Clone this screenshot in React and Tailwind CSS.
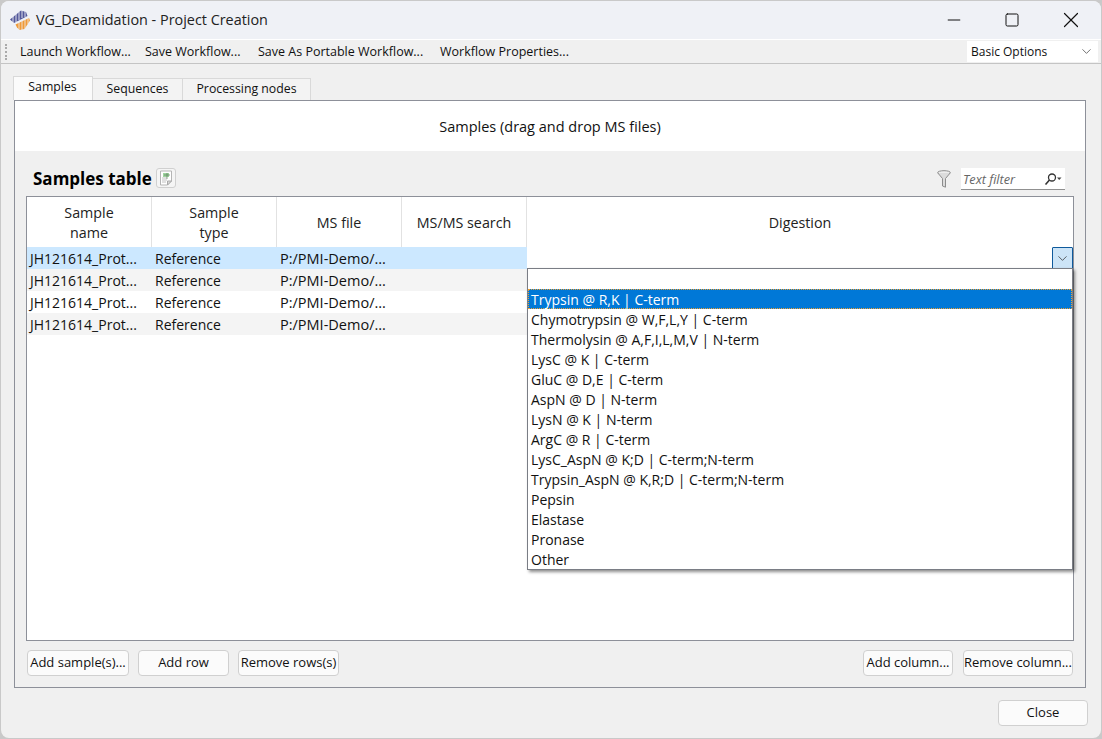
import { Minus, Square, X, ChevronDown } from "lucide-react";

const font = { fontFamily: '"Open Sans", "Noto Sans", sans-serif' };

const columns = [
  { label: ["Sample", "name"], className: "w-[125px]" },
  { label: ["Sample", "type"], className: "w-[125px]" },
  { label: ["MS file"], className: "w-[125px]" },
  { label: ["MS/MS search"], className: "w-[125px]" },
  { label: ["Digestion"], className: "flex-1" },
];

const digestions = [
  "Chymotrypsin @ W,F,L,Y | C-term",
  "Thermolysin @ A,F,I,L,M,V | N-term",
  "LysC @ K | C-term",
  "GluC @ D,E | C-term",
  "AspN @ D | N-term",
  "LysN @ K | N-term",
  "ArgC @ R | C-term",
  "LysC_AspN @ K;D | C-term;N-term",
  "Trypsin_AspN @ K,R;D | C-term;N-term",
  "Pepsin",
  "Elastase",
  "Pronase",
  "Other",
];

const Logo = () => (
  <svg width="20" height="20" viewBox="0 0 20 20" className="shrink-0">
    <path d="M0 9.500L11 .5l5 1.500 1.500 4L4 13z" fill="#53589a" />
    <path d="M3 6v8M6 4v8M9 2v8M12 0v8M15 0v7" stroke="#eff1f6" strokeWidth="0.9" />
    <path d="M5.500 14.500L19 8l1 2.500L14.500 19l-5 1-2.500-2.500z" fill="#f09a38" />
    <path d="M9 12v9M12 10.500v10M15 9v10M18 7v7" stroke="#eff1f6" strokeWidth="0.8" />
  </svg>
);

const ToolbarItem = ({ children, className }) => (
  <span className={`pt-[1px] text-[12.5px] whitespace-nowrap text-[#111] ${className}`}>{children}</span>
);

const Tab = ({ children, active, className }) => (
  <div
    className={`flex items-center justify-center border border-[#d9d9d9] border-b-0 text-[12.3px] text-[#111] ${
      active ? "bg-[#fbfbfb] h-[24px] pb-[2px] pr-[1px]" : "bg-[#f3f3f3] h-[22px] border-l-0"
    } ${className}`}
  >
    {children}
  </div>
);

const Btn = ({ children, className }) => (
  <button className={`h-[26px] rounded-[4px] border border-[#d0d0d0] bg-[#fbfbfb] text-[13px] whitespace-nowrap text-[#111] ${className}`}>
    {children}
  </button>
);

const Row = ({ selected, striped }) => {
  const bg = selected ? "bg-[#cce8ff]" : striped ? "bg-[#f4f4f4]" : "bg-white";
  return (
    <div className="flex h-[22px] text-[14px] leading-[23px] text-[#111]">
      <div className={`flex w-[500px] ${bg}`}>
        <div className="w-[125px] pl-[3px] whitespace-nowrap overflow-hidden">JH121614_Prot...</div>
        <div className="w-[125px] pl-[3px]">Reference</div>
        <div className="w-[125px] pl-[3px] text-[14.5px] whitespace-nowrap">P:/PMI-Demo/...</div>
      </div>
      <div className={`flex-1 ${selected ? "bg-white border-b border-[#ececec]" : bg}`} />
    </div>
  );
};

export default function App() {
  return (
    <div style={font} className="h-[739px] w-[1102px] overflow-hidden bg-[#c9c9c9] p-[1px]">
      <div className="flex h-full w-full flex-col overflow-hidden rounded-lg bg-[#f0f0f0]">
        {/* title bar */}
        <div className="flex h-[38px] shrink-0 items-center bg-[#eff1f6] pl-[9px] pr-[1px]">
          <Logo />
          <span className="ml-[6px] text-[14.4px] text-[#222]">VG_Deamidation - Project Creation</span>
          <div className="ml-auto flex items-center">
            <div className="flex w-[56px] justify-center"><Minus size={20} strokeWidth={1.2} color="#111" /></div>
            <div className="flex w-[60px] justify-center"><Square size={16} strokeWidth={1.5} color="#111" /></div>
            <div className="flex w-[58px] justify-center"><X size={26} strokeWidth={1.1} color="#111" /></div>
          </div>
        </div>

        {/* toolbar */}
        <div className="flex h-[25px] shrink-0 items-center border-b border-t border-b-[#c4c4c4] border-t-white bg-[#f0f0f0] pl-[4px] pr-[3px]">
          <div className="mr-[11px] h-[16px] w-[4px] border-l-2 border-dotted border-[#aaa]" />
          <div className="flex">
            <ToolbarItem className="w-[125px]">Launch Workflow...</ToolbarItem>
            <ToolbarItem className="w-[113px]">Save Workflow...</ToolbarItem>
            <ToolbarItem className="w-[182px]">Save As Portable Workflow...</ToolbarItem>
            <ToolbarItem>Workflow Properties...</ToolbarItem>
          </div>
          <div className="ml-auto flex h-[21px] w-[131px] items-center justify-between bg-white pl-[4px] pr-[4px] text-[12px] text-[#111]">
            Basic Options
            <ChevronDown size={15} strokeWidth={1.1} color="#333" />
          </div>
        </div>

        {/* tabs */}
        <div className="flex h-[36px] shrink-0 items-end pl-[12px] pr-[16px]">
          <Tab active className="w-[80px]">Samples</Tab>
          <Tab className="w-[90px]">Sequences</Tab>
          <Tab className="w-[128px]">Processing nodes</Tab>
        </div>

        {/* panel */}
        <div className="ml-[13px] mr-[15px] flex h-[588px] shrink-0 flex-col border border-[#8d9099] bg-[#f0f0f0]">
          <div className="flex h-[50px] items-center justify-center bg-white pt-[2px] text-[14.5px] text-[#111]">
            Samples (drag and drop MS files)
          </div>

          <div className="flex h-[45px] items-end px-[11px] pb-[6px]">
            <div className="ml-[7px] -mb-[1px] flex items-start">
              <span className="text-[17px] leading-[24px] font-bold text-black">Samples table</span>
              <div className="ml-[4px] mt-[1px] flex h-[20px] w-[20px] items-center justify-center rounded-[3px] border border-[#d0d0d0] bg-[#f5f5f5]">
                <svg width="14" height="16" viewBox="0 0 14 16">
                  <path d="M1.500 1h11v10l-4 4h-7z" fill="#fff" stroke="#b5b5b5" />
                  <path d="M3 8h5M3 10h5M3 12h4" stroke="#c2c2c2" />
                  <path d="M4 3h6v4H4z" fill="#9fd49f" />
                  <path d="M8 3v6M5 5h6" stroke="#5f7f5f" strokeWidth="0.7" />
                  <path d="M8.500 15v-4h4z" fill="#d9d9d9" stroke="#aaa" />
                </svg>
              </div>
            </div>
            <div className="ml-auto mr-[9px] flex items-center">
              <svg width="14" height="18" viewBox="0 0 14 18" className="mr-[10px]">
                <ellipse cx="7" cy="2.500" rx="6.300" ry="1.800" fill="#ededed" stroke="#8c8c8c" />
                <path d="M.8 3l4.700 5.500v7.500l3 1.200V8.500L13.200 3" fill="#dcdcdc" stroke="#8c8c8c" />
              </svg>
              <div className="flex h-[22px] w-[104px] items-center justify-between border-b border-[#909090] bg-white pl-[2px] pr-[3px]">
                <span className="pt-[2px] text-[12.7px] italic text-[#666]">Text filter</span>
                <svg width="18" height="14" viewBox="0 0 18 14">
                  <circle cx="8" cy="5.500" r="3.500" fill="none" stroke="#333" strokeWidth="1.300" />
                  <path d="M5.500 8l-4 4.500" stroke="#333" strokeWidth="1.600" />
                  <path d="M13 5.500h4.500L15.200 8z" fill="#444" />
                </svg>
              </div>
            </div>
          </div>

          <div className="relative mx-[11px] flex h-[445px] flex-col border border-[#8d9099] bg-white">
            <div className="flex h-[50px] shrink-0">
              {columns.map((col) => (
                <div
                  key={col.label.join(" ")}
                  className={`flex flex-col items-center justify-center border-r border-[#e2e2e2] pt-[1px] text-[14.3px] leading-[20px] text-[#222] last:border-r-0 ${col.className}`}
                >
                  {col.label.map((line) => (
                    <span key={line}>{line}</span>
                  ))}
                </div>
              ))}
            </div>
            <Row selected />
            <Row striped />
            <Row />
            <Row striped />

            {/* combo arrow in the digestion cell */}
            <div className="absolute right-0 top-[50px] flex h-[22px] w-[21px] items-center justify-center rounded-[1px] border border-[#0f5a9c] bg-[#cce4f7]">
              <ChevronDown size={15} strokeWidth={1.1} color="#222" />
            </div>

            {/* open dropdown */}
            <div className="absolute left-[500px] top-[71px] z-10 w-[546px] border border-[#7a7d85] bg-white shadow-[2px_2px_3px_rgba(0,0,0,0.45)]">
              <div className="h-[20px]" />
              <div className="h-[20px] border border-dotted border-[#f0a030] bg-[#0078d7] pl-[2px] text-[14px] leading-[20px] text-white">
                Trypsin @ R,K | C-term
              </div>
              {digestions.map((item) => (
                <div key={item} className="h-[20px] pl-[3px] text-[14px] leading-[22px] text-[#111]">
                  {item}
                </div>
              ))}
            </div>
          </div>

          <div className="mx-[12px] mt-[9px] flex">
            <Btn className="w-[102px]">Add sample(s)...</Btn>
            <Btn className="ml-[9px] w-[91px]">Add row</Btn>
            <Btn className="ml-[9px] w-[101px]">Remove rows(s)</Btn>
            <Btn className="ml-auto w-[90px]">Add column...</Btn>
            <Btn className="ml-[10px] w-[110px]">Remove column...</Btn>
          </div>
        </div>

        {/* footer */}
        <div className="flex flex-1 items-start justify-end pr-[13px] pt-[12px]">
          <Btn className="w-[90px]">Close</Btn>
        </div>
      </div>
    </div>
  );
}
